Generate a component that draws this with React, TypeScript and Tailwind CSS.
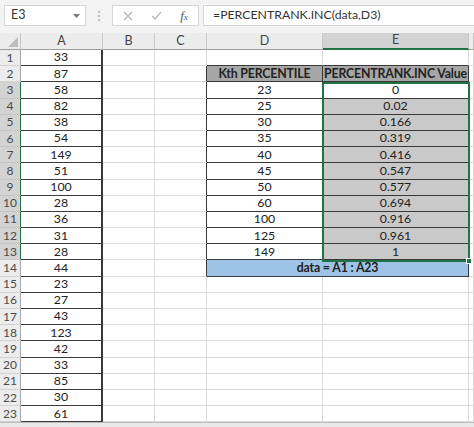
import React from "react";

const A = [33, 87, 58, 82, 38, 54, 149, 51, 100, 28, 36, 31, 28, 44, 23, 27, 43, 123, 42, 33, 85, 30, 61];
const D = [23, 25, 30, 35, 40, 45, 50, 60, 100, 125, 149];
const E = ["0", "0.02", "0.166", "0.319", "0.416", "0.547", "0.577", "0.694", "0.916", "0.961", "1"];

const DARK = "border-r-[#3a3a3a]";

function Toolbar() {
  return (
    <div className="h-[33px] flex items-start pt-[5px] pl-[4px] bg-[#f3f3f3]">
      <div className="w-[82px] h-[21px] bg-white border border-[#d6d6d6] flex items-center justify-between pl-[6px] pr-[5px]">
        <span className="text-[12.5px] text-[#333]">E3</span>
        <svg width="7" height="4" viewBox="0 0 7 4">
          <polygon points="0,0 7,0 3.5,4" fill="#7a7a7a" />
        </svg>
      </div>
      <div className="w-[26px] h-[21px] flex flex-col items-center justify-center gap-[2px]">
        <span className="w-[2px] h-[2px] bg-[#c0c0c0]" />
        <span className="w-[2px] h-[2px] bg-[#c0c0c0]" />
        <span className="w-[2px] h-[2px] bg-[#c0c0c0]" />
      </div>
      <div className="w-[87px] h-[21px] bg-white border border-[#d6d6d6] flex items-center">
        <div className="w-[28px] flex justify-center ml-[1px]">
          <svg width="10" height="10" viewBox="0 0 10 10">
            <path d="M1 1 L9 9 M9 1 L1 9" stroke="#b5b5b5" strokeWidth="1.2" fill="none" />
          </svg>
        </div>
        <div className="w-[28px] flex justify-center">
          <svg width="11" height="9" viewBox="0 0 11 9">
            <path d="M1 5 L4 8 L10 1" stroke="#b5b5b5" strokeWidth="1.2" fill="none" />
          </svg>
        </div>
        <div className="w-[28px] flex justify-center">
          <span className="font-['Liberation_Serif',serif] italic text-[13px] text-[#555] leading-none">
            f<span className="text-[9px]">x</span>
          </span>
        </div>
      </div>
      <div className="ml-[4px] flex-1 h-[21px] bg-white border border-[#d6d6d6] border-r-0 flex items-center pl-[9px]">
        <span className="text-[12.3px] text-[#333] whitespace-nowrap">=PERCENTRANK.INC(data,D3)</span>
      </div>
    </div>
  );
}

function ColHeader() {
  const base = "h-full flex items-center justify-center border-r border-r-[#c8c8c8] border-b border-b-[#9e9e9e] text-[12.5px] text-[#444]";
  return (
    <div className="h-[17px] flex">
      <div className="w-[21px] h-full bg-[#ececec] border-r border-r-[#c8c8c8] border-b border-b-[#9e9e9e] flex items-end justify-end pr-[2px] pb-[2px]">
        <svg width="10" height="10" viewBox="0 0 10 10">
          <polygon points="10,0 10,10 0,10" fill="#bdbdbd" />
        </svg>
      </div>
      <div className={`w-[82px] bg-[#ececec] ${base}`}>A</div>
      <div className={`w-[52px] bg-[#ececec] ${base}`}>B</div>
      <div className={`w-[52px] bg-[#ececec] ${base}`}>C</div>
      <div className={`w-[116px] bg-[#ececec] ${base}`}>D</div>
      <div className="w-[146px] h-full flex items-center justify-center bg-[#d3d3d3] border-r border-r-[#c8c8c8] border-b-2 border-b-[#217346] text-[12.5px] text-[#444]">E</div>
      <div className={`flex-1 bg-[#ececec] ${base}`}></div>
    </div>
  );
}

function Row({ r }: { r: number }) {
  const sel = r >= 3 && r <= 13;
  const inTable = r >= 2 && r <= 13;
  const cell = "h-full flex items-center justify-center text-[12.3px] text-[#222] border-r border-b whitespace-nowrap";
  const grid = "border-r-[#dadada] border-b-[#dadada] bg-white";
  const hdr = "font-bold text-[11.4px] tracking-[-0.15px] text-[#1a1a1a]";

  const rh = sel
    ? "bg-[#d3d3d3] border-r-[#217346] border-b-[#c4c4c4]"
    : "bg-[#ececec] border-r-[#a8a8a8] border-b-[#d2d2d2]";

  const cRight = r >= 2 && r <= 14 ? "border-r-[#3a3a3a] border-b-[#dadada] bg-white" : grid;

  let dE: React.ReactNode;
  if (r === 1) {
    dE = (
      <>
        <div className={`w-[116px] ${cell} border-r-[#dadada] border-b-[#3a3a3a] bg-white`} />
        <div className={`w-[146px] ${cell} border-r-[#dadada] border-b-[#3a3a3a] bg-white`} />
      </>
    );
  } else if (r === 2) {
    dE = (
      <>
        <div className={`w-[116px] ${cell} ${DARK} border-b-[#3a3a3a] bg-[#a6a6a6] ${hdr}`}>Kth PERCENTILE</div>
        <div className={`w-[146px] ${cell} ${DARK} border-b-[#3a3a3a] bg-[#a6a6a6] ${hdr}`}>PERCENTRANK.INC Value</div>
      </>
    );
  } else if (inTable) {
    const i = r - 3;
    dE = (
      <>
        <div className={`w-[116px] ${cell} ${DARK} border-b-[#3a3a3a] bg-white`}>{D[i]}</div>
        <div className={`w-[146px] ${cell} ${DARK} border-b-[#3a3a3a] ${r === 3 ? "bg-white" : "bg-[#c9c9c9]"}`}>{E[i]}</div>
      </>
    );
  } else if (r === 14) {
    dE = (
      <div className={`w-[262px] ${cell} ${DARK} border-b-[#3a3a3a] bg-[#9dc3e6] ${hdr}`}>data = A1 : A23</div>
    );
  } else {
    dE = (
      <>
        <div className={`w-[116px] ${cell} ${grid}`} />
        <div className={`w-[146px] ${cell} ${grid}`} />
      </>
    );
  }

  return (
    <div className="h-[16.2px] flex">
      <div className={`w-[21px] h-full flex items-center justify-center text-[12px] text-[#4a4a4a] border-r border-b ${rh}`}>{r}</div>
      <div className={`w-[82px] ${cell} border-r-2 border-r-[#3a3a3a] border-b-[#3a3a3a] bg-white`}>{A[r - 1]}</div>
      <div className={`w-[52px] ${cell} ${grid}`} />
      <div className={`w-[52px] ${cell} ${cRight}`} />
      {dE}
      <div className={`flex-1 ${cell} ${grid}`} />
    </div>
  );
}

export default function App() {
  const rows = Array.from({ length: 23 }, (_, i) => i + 1);
  return (
    <div className="relative w-[474px] h-[427px] overflow-hidden bg-[#e9e9e9] font-['Lato','Open_Sans',sans-serif] leading-none">
      <Toolbar />
      <ColHeader />
      {rows.map((r) => (
        <Row key={r} r={r} />
      ))}
      <div className="h-[1px] bg-[#bdbdbd]" />
      <div className="absolute left-[322px] top-[82px] w-[148px] h-[180px] border-2 border-[#217346] pointer-events-none" />
      <div className="absolute left-[466px] top-[258px] w-[6px] h-[6px] bg-[#217346] border border-white" />
    </div>
  );
}
